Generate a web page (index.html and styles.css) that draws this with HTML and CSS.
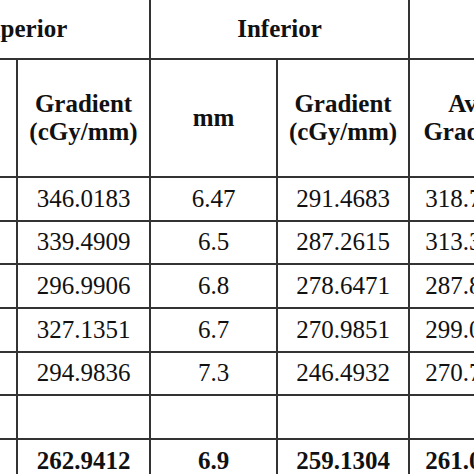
FILE: index.html
```html
<!DOCTYPE html>
<html>
<head>
<meta charset="utf-8">
<link rel="stylesheet" href="styles.css">
</head>
<body>
<div class="crop">
<table class="grid">
<colgroup>
<col class="c-mm"><col class="c-grad"><col class="c-mm"><col class="c-grad2"><col class="c-avg">
</colgroup>
<tr class="h1">
<th colspan="2">Superior</th>
<th colspan="2">Inferior</th>
<th></th>
</tr>
<tr class="h2">
<th>mm</th>
<th>Gradient<br>(cGy/mm)</th>
<th>mm</th>
<th>Gradient<br>(cGy/mm)</th>
<th>Avg.<br>Gradient</th>
</tr>
<tr class="d"><td>6.3</td><td>346.0183</td><td>6.47</td><td>291.4683</td><td>318.7433</td></tr>
<tr class="d"><td>6.4</td><td>339.4909</td><td>6.5</td><td>287.2615</td><td>313.3762</td></tr>
<tr class="d"><td>6.8</td><td>296.9906</td><td>6.8</td><td>278.6471</td><td>287.8189</td></tr>
<tr class="d"><td>6.6</td><td>327.1351</td><td>6.7</td><td>270.9851</td><td>299.0601</td></tr>
<tr class="d"><td>7.1</td><td>294.9836</td><td>7.3</td><td>246.4932</td><td>270.7384</td></tr>
<tr class="d"><td></td><td></td><td></td><td></td><td></td></tr>
<tr class="d total"><td>6.8</td><td>262.9412</td><td>6.9</td><td>259.1304</td><td>261.0358</td></tr>
</table>
</div>
</body>
</html>
```
FILE: styles.css
```css
html, body {
  margin: 0;
  padding: 0;
  background: #fff;
}
.crop {
  width: 474px;
  height: 474px;
  overflow: hidden;
}
.grid {
  border-collapse: collapse;
  table-layout: fixed;
  width: 645px;
  margin-left: -111px;
  margin-top: -2px;
  font-family: "Liberation Serif", "Times New Roman", serif;
  font-size: 25px;
  color: #111;
}
.c-mm { width: 127px; }
.c-grad { width: 133px; }
.c-grad2 { width: 132px; }
.c-avg { width: 126px; }
.grid th, .grid td {
  border: 2px solid #333;
  padding: 0;
  text-align: center;
  vertical-align: middle;
  white-space: nowrap;
}
.grid th {
  font-weight: bold;
  line-height: 28px;
}
.h1 th { height: 58px; }
.h2 th { height: 116px; }
.d td { height: 41.67px; line-height: 28px; }
.total td { font-weight: bold; }
```
